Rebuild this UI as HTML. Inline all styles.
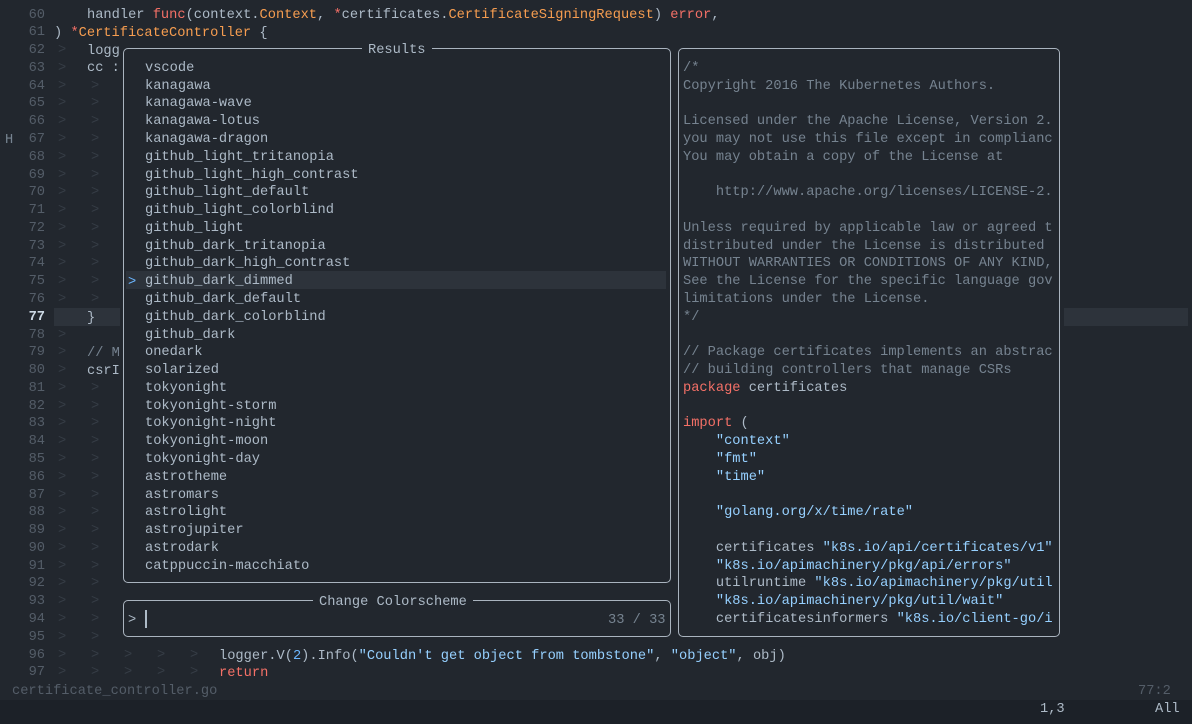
<!DOCTYPE html>
<html><head><meta charset="utf-8"><style>
body{margin:0;width:1192px;height:724px;background:#22272e;overflow:hidden;position:relative;font-family:"Liberation Mono",monospace;font-size:13.7px;color:#adbac7}
.l{position:absolute;white-space:pre;height:18px;line-height:18px;margin-top:2.5px}
.n{position:absolute;white-space:pre;line-height:18px;width:45px;text-align:right;color:#545d68;left:0;margin-top:2.5px}
.a{color:#363d46}
.k{color:#f47067}.t{color:#f69d50}.s{color:#96d0ff}.c{color:#768390}.b{color:#6cb6ff}
.box{position:absolute;border:1.5px solid #aab4bf;border-radius:5px;background:#22272e;box-sizing:border-box}
.ttl{position:absolute;background:#22272e;padding:0 6px;line-height:18px;white-space:pre;margin-top:2px}
</style></head><body>
<div style="position:absolute;left:54px;top:308px;width:66px;height:18px;background:#2d333b"></div>
<div style="position:absolute;left:1064px;top:308px;width:124px;height:18px;background:#2d333b"></div>
<div style="position:absolute;left:0;top:700px;width:1192px;height:24px;background:#1c2128"></div>
<div id="g"></div>
<div class="l" style="left:5px;top:129px;color:#768390">H</div>
<div class="l" style="left:87px;top:4px">handler <span class="k">func</span>(context.<span class="t">Context</span>, <span class="k">*</span>certificates.<span class="t">CertificateSigningRequest</span>) <span class="k">error</span>,</div>
<div class="l" style="left:54px;top:22px">) <span class="k">*</span><span class="t">CertificateController</span> {</div>
<div class="l" style="left:87px;top:40px">logg</div>
<div class="l" style="left:87px;top:57px">cc :</div>
<div class="l" style="left:87px;top:307px">}</div>
<div class="l c" style="left:87px;top:342px">// M</div>
<div class="l" style="left:87px;top:360px">csrI</div>
<div class="l" style="left:219px;top:645px">logger.V(<span class="b">2</span>).Info(<span class="s">"Couldn't get object from tombstone"</span>, <span class="s">"object"</span>, obj)</div>
<div class="l k" style="left:219px;top:662px">return</div>
<div class="l" style="left:12px;top:680px;color:#545d68">certificate_controller.go</div>
<div class="l" style="left:1138px;top:680px;color:#545d68">77:2</div>
<div class="l" style="left:1040px;top:698px">1,3</div>
<div class="l" style="left:1155px;top:698px">All</div>

<div class="box" style="left:123px;top:48px;width:548px;height:535px"></div>
<div class="ttl" style="left:362px;top:40px">Results</div>
<div style="position:absolute;left:126px;top:271px;width:540px;height:18px;background:#2d333b"></div>
<div class="l b" style="left:128px;top:271px">&gt;</div>
<div id="r"></div>

<div class="box" style="left:123px;top:600px;width:548px;height:37px"></div>
<div class="ttl" style="left:313px;top:592px">Change Colorscheme</div>
<div class="l" style="left:128px;top:609px">&gt;</div>
<div style="position:absolute;left:145px;top:610px;width:1.5px;height:18px;background:#adbac7"></div>
<div class="l c" style="left:608px;top:609px">33 / 33</div>

<div class="box" style="left:678px;top:48px;width:382px;height:589px"></div>
<div id="p" style="position:absolute;left:683px;top:0;width:372px;height:640px;overflow:hidden"></div>
<script>
var g='';for(var i=0;i<38;i++){var y=4+i*17.78;var num=60+i;g+='<div class="n" style="top:'+y+'px'+(num==77?';color:#cdd9e5;font-weight:bold':'')+'">'+num+'</div>';
if(num>=62&&num<=97&&num!=77)g+='<div class="l a" style="left:58px;top:'+y+'px">&gt;</div>';
if((num>=64&&num<=76)||(num>=81))g+='<div class="l a" style="left:91px;top:'+y+'px">&gt;</div>';
if(num>=96){g+='<div class="l a" style="left:124px;top:'+y+'px">&gt;</div><div class="l a" style="left:157px;top:'+y+'px">&gt;</div><div class="l a" style="left:190px;top:'+y+'px">&gt;</div>';}}
document.getElementById('g').innerHTML=g;
var it=["vscode","kanagawa","kanagawa-wave","kanagawa-lotus","kanagawa-dragon","github_light_tritanopia","github_light_high_contrast","github_light_default","github_light_colorblind","github_light","github_dark_tritanopia","github_dark_high_contrast","github_dark_dimmed","github_dark_default","github_dark_colorblind","github_dark","onedark","solarized","tokyonight","tokyonight-storm","tokyonight-night","tokyonight-moon","tokyonight-day","astrotheme","astromars","astrolight","astrojupiter","astrodark","catppuccin-macchiato"];
var r='';it.forEach(function(s,i){r+='<div class="l" style="left:145px;top:'+(4+(i+3)*17.78)+'px">'+s+'</div>'});document.getElementById('r').innerHTML=r;
var P=['<span class="c">/*</span>','<span class="c">Copyright 2016 The Kubernetes Authors.</span>','','<span class="c">Licensed under the Apache License, Version 2.</span>','<span class="c">you may not use this file except in complianc</span>','<span class="c">You may obtain a copy of the License at</span>','','<span class="c">    http://www.apache.org/licenses/LICENSE-2.</span>','','<span class="c">Unless required by applicable law or agreed t</span>','<span class="c">distributed under the License is distributed </span>','<span class="c">WITHOUT WARRANTIES OR CONDITIONS OF ANY KIND,</span>','<span class="c">See the License for the specific language gov</span>','<span class="c">limitations under the License.</span>','<span class="c">*/</span>','','<span class="c">// Package certificates implements an abstrac</span>','<span class="c">// building controllers that manage CSRs</span>','<span class="k">package</span> certificates','','<span class="k">import</span> (','    <span class="s">"context"</span>','    <span class="s">"fmt"</span>','    <span class="s">"time"</span>','','    <span class="s">"golang.org/x/time/rate"</span>','','    certificates <span class="s">"k8s.io/api/certificates/v1"</span>','    <span class="s">"k8s.io/apimachinery/pkg/api/errors"</span>','    utilruntime <span class="s">"k8s.io/apimachinery/pkg/util</span>','    <span class="s">"k8s.io/apimachinery/pkg/util/wait"</span>','    certificatesinformers <span class="s">"k8s.io/client-go/i</span>'];
var p='';P.forEach(function(s,i){p+='<div class="l" style="left:0;top:'+(4+(i+3)*17.78)+'px">'+s+'</div>'});document.getElementById('p').innerHTML=p;
</script>
</body></html>
